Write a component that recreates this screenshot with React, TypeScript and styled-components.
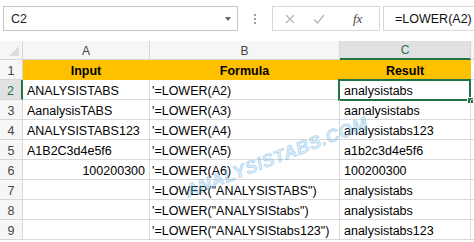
import React from "react";
import styled, { createGlobalStyle, css } from "styled-components";

const Global = createGlobalStyle`
  html, body { margin: 0; padding: 0; background: #fff; }
  body { width: 474px; height: 242px; overflow: hidden; font-family: "Liberation Sans", Arial, sans-serif; }
`;

const Page = styled.div`
  width: 474px;
  height: 242px;
  overflow: hidden;
  position: relative;
  background: #fff;
`;

const FormulaBar = styled.div`
  height: 41px;
  display: flex;
  align-items: flex-start;
  padding-top: 6px;
  box-sizing: border-box;
`;

const NameBox = styled.div`
  margin-left: 3px;
  width: 235px;
  height: 25px;
  box-sizing: border-box;
  border: 1px solid #c6c6c6;
  display: flex;
  align-items: center;
  justify-content: space-between;
  padding: 0 4px 0 7px;
  font-size: 12.5px;
  color: #222;
`;

const Arrow = styled.span`
  width: 0;
  height: 0;
  border-left: 3.5px solid transparent;
  border-right: 3.5px solid transparent;
  border-top: 4px solid #666;
  margin-right: 2px;
`;

const Dots = styled.div`
  width: 34px;
  height: 25px;
  display: flex;
  flex-direction: column;
  align-items: center;
  justify-content: center;
  gap: 2px;
  & > span { width: 2px; height: 2px; background: #a0a0a0; }
`;

const FxBox = styled.div`
  width: 108px;
  height: 25px;
  box-sizing: border-box;
  border: 1px solid #d8d8d8;
  display: flex;
  align-items: center;
  padding-left: 12px;
  gap: 18px;
`;

const Fx = styled.span`
  font-family: "Liberation Serif", "Times New Roman", serif;
  font-style: italic;
  font-size: 13px;
  color: #444;
  margin-left: 10px;
`;

const FormulaInput = styled.div`
  margin-left: 3px;
  flex: 1;
  height: 25px;
  box-sizing: border-box;
  border: 1px solid #d8d8d8;
  border-right: none;
  display: flex;
  align-items: center;
  padding-left: 11px;
  font-size: 12.5px;
  color: #111;
  white-space: nowrap;
`;

const Grid = styled.div`
  display: grid;
  grid-template-columns: 23px 127px 190px 131px 1fr;
  grid-template-rows: 19px repeat(9, 20px);
`;

type HeadProps = { $sel?: boolean };

const ColHead = styled.div<HeadProps>`
  background: ${(p) => (p.$sel ? "#e1e1e1" : "#f6f6f6")};
  border-right: 1px solid #d6d6d6;
  border-bottom: ${(p) => (p.$sel ? "2px solid #217346" : "1px solid #d6d6d6")};
  box-sizing: border-box;
  display: flex;
  align-items: center;
  justify-content: center;
  font-size: 12px;
  color: ${(p) => (p.$sel ? "#217346" : "#444")};
  padding-top: 1px;
`;

const Corner = styled(ColHead)`
  position: relative;
  &::after {
    content: "";
    position: absolute;
    right: 3px;
    bottom: 3px;
    width: 0;
    height: 0;
    border-left: 10px solid transparent;
    border-bottom: 10px solid #dcdcdc;
  }
`;

const RowHead = styled.div<HeadProps>`
  background: ${(p) => (p.$sel ? "#e1e1e1" : "#f6f6f6")};
  border-bottom: 1px solid #d6d6d6;
  border-right: ${(p) => (p.$sel ? "2px solid #217346" : "1px solid #d6d6d6")};
  box-sizing: border-box;
  display: flex;
  align-items: center;
  justify-content: center;
  font-size: 12.5px;
  color: ${(p) => (p.$sel ? "#217346" : "#444")};
  padding-top: 2px;
`;

type CellProps = { $head?: boolean; $right?: boolean; $sel?: boolean };

const Cell = styled.div<CellProps>`
  position: relative;
  box-sizing: border-box;
  border-right: 1px solid #dadada;
  border-bottom: 1px solid #dadada;
  display: flex;
  align-items: center;
  padding: 2px 4px 0 4px;
  font-size: 12.5px;
  color: #000;
  white-space: nowrap;
  justify-content: ${(p) => (p.$right ? "flex-end" : "flex-start")};
  ${(p) =>
    p.$head &&
    css`
      background: #ffc000;
      border-color: #ffc000;
      justify-content: center;
      font-weight: bold;
    `}
  ${(p) =>
    p.$sel &&
    css`
      &::before {
        content: "";
        position: absolute;
        left: -2px;
        top: -1px;
        right: -1px;
        bottom: -2px;
        border: 2px solid #217346;
        pointer-events: none;
      }
      &::after {
        content: "";
        position: absolute;
        right: -4px;
        bottom: -5px;
        width: 5px;
        height: 5px;
        background: #217346;
        border: 1px solid #fff;
      }
    `}
`;

const FormulaCell = styled(Cell)`
  padding-left: 2px;
`;

const Watermark = styled.div`
  position: absolute;
  left: 186px;
  top: 182px;
  transform: rotate(-21deg);
  transform-origin: left center;
  font-family: "Liberation Sans", Arial, sans-serif;
  font-weight: bold;
  font-style: italic;
  font-size: 18px;
  line-height: 20px;
  letter-spacing: 0.6px;
  color: rgba(120, 190, 235, 0.3);
  -webkit-text-stroke: 0.6px rgba(70, 160, 220, 0.45);
  white-space: nowrap;
  pointer-events: none;
`;

const rows: { a: string; b: string; c: string; right?: boolean }[] = [
  { a: "ANALYSISTABS", b: "'=LOWER(A2)", c: "analysistabs" },
  { a: "AanalysisTABS", b: "'=LOWER(A3)", c: "aanalysistabs" },
  { a: "ANALYSISTABS123", b: "'=LOWER(A4)", c: "analysistabs123" },
  { a: "A1B2C3d4e5f6", b: "'=LOWER(A5)", c: "a1b2c3d4e5f6" },
  { a: "100200300", b: "'=LOWER(A6)", c: "100200300", right: true },
  { a: "", b: "'=LOWER(\"ANALYSISTABS\")", c: "analysistabs" },
  { a: "", b: "'=LOWER(\"ANALYSIStabs\")", c: "analysistabs" },
  { a: "", b: "'=LOWER(\"ANALYSIStabs123\")", c: "analysistabs123" },
];

const XIcon = () => (
  <svg width="10" height="10" viewBox="0 0 10 10">
    <path d="M1 1 L9 9 M9 1 L1 9" stroke="#b4b4b4" strokeWidth="1.2" fill="none" />
  </svg>
);

const CheckIcon = () => (
  <svg width="12" height="10" viewBox="0 0 12 10">
    <path d="M1 5.5 L4.5 9 L11 1" stroke="#b4b4b4" strokeWidth="1.2" fill="none" />
  </svg>
);

export default function App() {
  return (
    <Page>
      <Global />
      <FormulaBar>
        <NameBox>
          <span>C2</span>
          <Arrow />
        </NameBox>
        <Dots>
          <span />
          <span />
          <span />
        </Dots>
        <FxBox>
          <XIcon />
          <CheckIcon />
          <Fx>fx</Fx>
        </FxBox>
        <FormulaInput>=LOWER(A2)</FormulaInput>
      </FormulaBar>
      <Grid>
        <Corner />
        <ColHead>A</ColHead>
        <ColHead>B</ColHead>
        <ColHead $sel>C</ColHead>
        <ColHead />

        <RowHead>1</RowHead>
        <Cell $head>Input</Cell>
        <Cell $head>Formula</Cell>
        <Cell $head>Result</Cell>
        <Cell />

        {rows.map((r, i) => (
          <React.Fragment key={i}>
            <RowHead $sel={i === 0}>{i + 2}</RowHead>
            <Cell $right={r.right}>{r.a}</Cell>
            <FormulaCell>{r.b}</FormulaCell>
            <Cell $sel={i === 0}>{r.c}</Cell>
            <Cell />
          </React.Fragment>
        ))}
      </Grid>
      <Watermark>ANALYSISTABS.COM</Watermark>
    </Page>
  );
}
